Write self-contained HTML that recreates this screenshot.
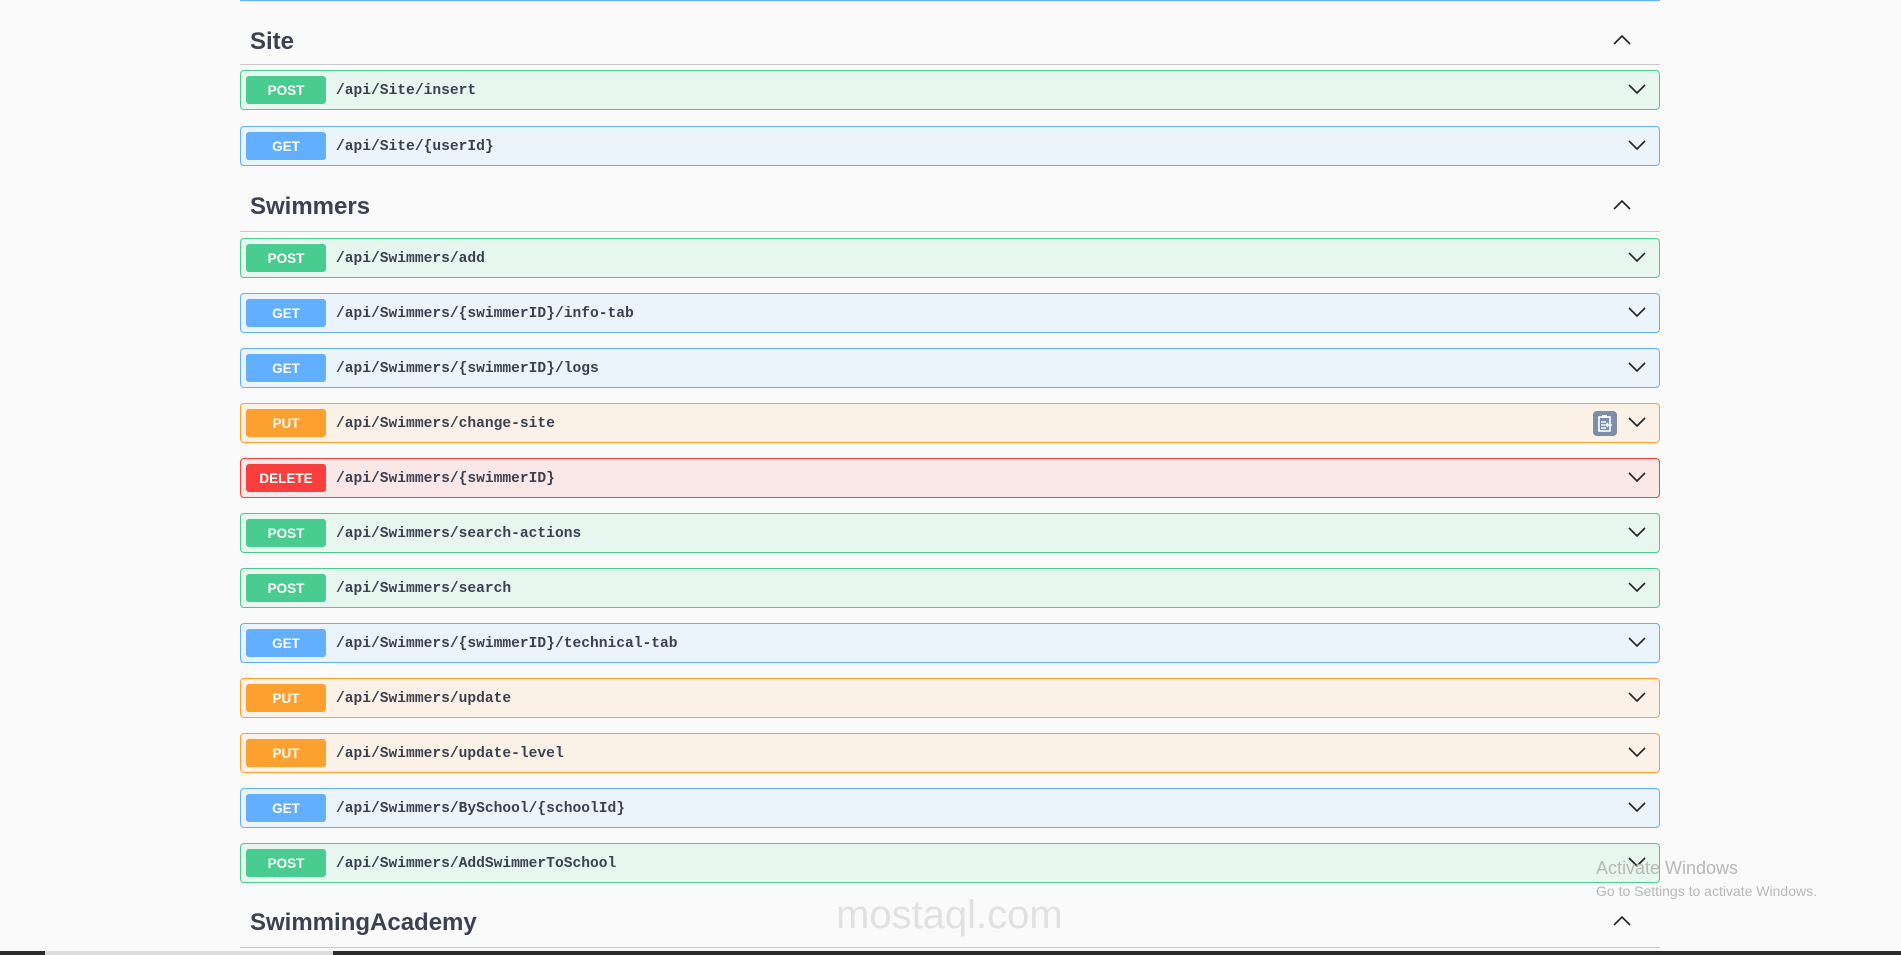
<!DOCTYPE html>
<html><head><meta charset="utf-8"><style>
body{margin:0;width:1901px;height:955px;background:#fafafa;position:relative;overflow:hidden;font-family:"Liberation Sans",sans-serif;}
.top{position:absolute;left:240px;top:-2px;width:1418px;height:2px;border:1px solid #61affe;border-top:none;background:#ebf3fb}
.h{position:absolute;left:240px;width:1420px;border-bottom:1px solid #c8c8c8;}
.h span{position:absolute;left:10px;font-weight:bold;font-size:24px;color:#3b4151}
.h svg{position:absolute;right:28px}
.r{position:absolute;left:240px;width:1418px;height:38px;border:1px solid;border-radius:4px;}
.b{position:absolute;left:5px;top:5px;width:80px;height:28px;border-radius:3px;color:#fff;font-weight:bold;font-size:13.5px;text-align:center;line-height:29px}
.p{position:absolute;left:95px;top:12px;font-family:"Liberation Mono",monospace;font-weight:bold;font-size:14.6px;color:#3b4151}
.r svg.c{position:absolute;right:12px;top:11px}
.post{border-color:#49cc90;background:#e8f6f0}.post .b{background:#49cc90}
.get{border-color:#61affe;background:#ebf3fb}.get .b{background:#61affe}
.put{border-color:#fca130;background:#fbf1e6}.put .b{background:#fca130}
.del{border-color:#f93e3e;background:#fae7e7}.del .b{background:#f93e3e}
.aw{position:absolute;left:1596px;color:#b8b8b8}
</style></head><body>
<div class="top"></div>

<div class="h" style="top:20px;height:44px"><span style="top:8px">Site</span><svg width="20" height="14" style="top:13px"><path d="M2 11 L10 3 L18 11" fill="none" stroke="#222" stroke-width="1.6"/></svg></div>
<div class="r post" style="top:70px"><div class="b">POST</div><div class="p">/api/Site/insert</div><svg class="c" width="20" height="14"><path d="M2 3 L10 11 L18 3" fill="none" stroke="#222" stroke-width="1.6"/></svg></div>
<div class="r get" style="top:126px"><div class="b">GET</div><div class="p">/api/Site/{userId}</div><svg class="c" width="20" height="14"><path d="M2 3 L10 11 L18 3" fill="none" stroke="#222" stroke-width="1.6"/></svg></div>

<div class="h" style="top:186px;height:45px"><span style="top:7px">Swimmers</span><svg width="20" height="14" style="top:12px"><path d="M2 11 L10 3 L18 11" fill="none" stroke="#222" stroke-width="1.6"/></svg></div>

<div class="r post" style="top:238px"><div class="b">POST</div><div class="p">/api/Swimmers/add</div><svg class="c" width="20" height="14"><path d="M2 3 L10 11 L18 3" fill="none" stroke="#222" stroke-width="1.6"/></svg></div>
<div class="r get" style="top:293px"><div class="b">GET</div><div class="p">/api/Swimmers/{swimmerID}/info-tab</div><svg class="c" width="20" height="14"><path d="M2 3 L10 11 L18 3" fill="none" stroke="#222" stroke-width="1.6"/></svg></div>
<div class="r get" style="top:348px"><div class="b">GET</div><div class="p">/api/Swimmers/{swimmerID}/logs</div><svg class="c" width="20" height="14"><path d="M2 3 L10 11 L18 3" fill="none" stroke="#222" stroke-width="1.6"/></svg></div>
<div class="r put" style="top:403px"><div class="b">PUT</div><div class="p">/api/Swimmers/change-site</div>
<svg style="position:absolute;right:42px;top:7px" width="24" height="25"><rect width="24" height="25" rx="4" fill="#7d8ea8"/><rect x="6" y="6" width="11" height="14" fill="none" stroke="#fff" stroke-width="1.6"/><rect x="9" y="4" width="5" height="3" fill="#fff"/><path d="M8 11h5M8 14h4M8 17h5M19 14h-6M15 12l-2 2 2 2" stroke="#fff" stroke-width="1.4" fill="none"/></svg>
<svg class="c" width="20" height="14"><path d="M2 3 L10 11 L18 3" fill="none" stroke="#222" stroke-width="1.6"/></svg></div>
<div class="r del" style="top:458px"><div class="b">DELETE</div><div class="p">/api/Swimmers/{swimmerID}</div><svg class="c" width="20" height="14"><path d="M2 3 L10 11 L18 3" fill="none" stroke="#222" stroke-width="1.6"/></svg></div>
<div class="r post" style="top:513px"><div class="b">POST</div><div class="p">/api/Swimmers/search-actions</div><svg class="c" width="20" height="14"><path d="M2 3 L10 11 L18 3" fill="none" stroke="#222" stroke-width="1.6"/></svg></div>
<div class="r post" style="top:568px"><div class="b">POST</div><div class="p">/api/Swimmers/search</div><svg class="c" width="20" height="14"><path d="M2 3 L10 11 L18 3" fill="none" stroke="#222" stroke-width="1.6"/></svg></div>
<div class="r get" style="top:623px"><div class="b">GET</div><div class="p">/api/Swimmers/{swimmerID}/technical-tab</div><svg class="c" width="20" height="14"><path d="M2 3 L10 11 L18 3" fill="none" stroke="#222" stroke-width="1.6"/></svg></div>
<div class="r put" style="top:678px"><div class="b">PUT</div><div class="p">/api/Swimmers/update</div><svg class="c" width="20" height="14"><path d="M2 3 L10 11 L18 3" fill="none" stroke="#222" stroke-width="1.6"/></svg></div>
<div class="r put" style="top:733px"><div class="b">PUT</div><div class="p">/api/Swimmers/update-level</div><svg class="c" width="20" height="14"><path d="M2 3 L10 11 L18 3" fill="none" stroke="#222" stroke-width="1.6"/></svg></div>
<div class="r get" style="top:788px"><div class="b">GET</div><div class="p">/api/Swimmers/BySchool/{schoolId}</div><svg class="c" width="20" height="14"><path d="M2 3 L10 11 L18 3" fill="none" stroke="#222" stroke-width="1.6"/></svg></div>
<div class="r post" style="top:843px"><div class="b">POST</div><div class="p">/api/Swimmers/AddSwimmerToSchool</div><svg class="c" width="20" height="14"><path d="M2 3 L10 11 L18 3" fill="none" stroke="#222" stroke-width="1.6"/></svg></div>

<div class="h" style="top:900px;height:47px"><span style="top:9px">SwimmingAcademy</span><svg width="20" height="14" style="top:14px"><path d="M2 11 L10 3 L18 11" fill="none" stroke="#222" stroke-width="1.6"/></svg></div>

<div style="position:absolute;left:836px;top:893px;font-size:40px;color:rgba(170,170,170,.3)">mostaql.com</div>
<div class="aw" style="top:858px;font-size:18px">Activate Windows</div>
<div class="aw" style="top:883px;font-size:14px">Go to Settings to activate Windows.</div>
<div style="position:absolute;left:0;top:951px;width:1901px;height:4px;background:#2b2b2b"></div>
<div style="position:absolute;left:45px;top:951px;width:288px;height:4px;background:#ddd"></div>
</body></html>
